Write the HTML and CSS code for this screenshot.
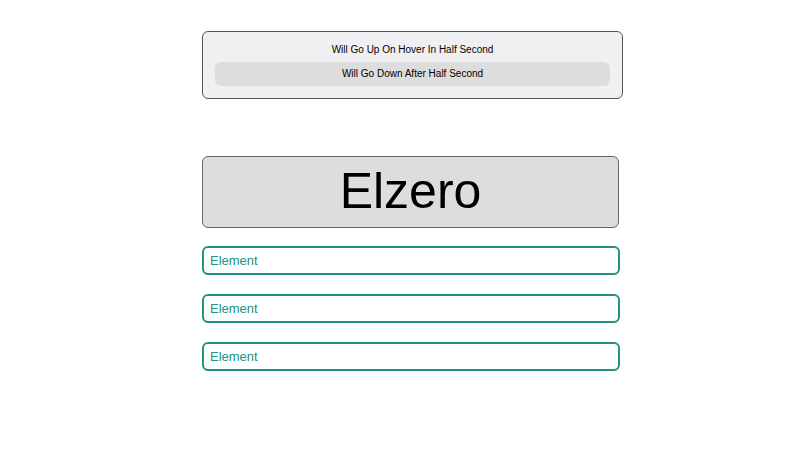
FILE: index.html
```html
<!DOCTYPE html>
<html lang="en">
<head>
<meta charset="utf-8">
<title>Transitions</title>
<link rel="stylesheet" href="styles.css">
</head>
<body>
<div class="page">
  <div class="hover-box">
    <div class="hover-line">Will Go Up On Hover In Half Second</div>
    <div class="hover-bar">Will Go Down After Half Second</div>
  </div>
  <div class="brand">Elzero</div>
  <div class="list">
    <div class="element">Element</div>
    <div class="element">Element</div>
    <div class="element">Element</div>
  </div>
</div>
</body>
</html>
```
FILE: styles.css
```css
html, body {
  margin: 0;
  padding: 0;
  background: #ffffff;
}

body {
  font-family: "Liberation Sans", Arial, sans-serif;
  color: #000000;
}

.page {
  display: flex;
  flex-direction: column;
  align-items: flex-start;
  padding: 31px 0 0 202px;
}

.hover-box {
  box-sizing: border-box;
  width: 421px;
  background: #f0f0f2;
  border: 1px solid #555555;
  border-radius: 6px;
  padding: 12px 12px 12px;
  display: flex;
  flex-direction: column;
  gap: 6px;
  font-size: 10px;
  text-align: center;
}

.hover-line {
  line-height: 12px;
}

.hover-bar {
  background: #dddddd;
  border-radius: 6px;
  padding: 6px 0;
  line-height: 12px;
}

.brand {
  box-sizing: border-box;
  width: 417px;
  margin-top: 57px;
  background: #dddddd;
  border: 1px solid #666666;
  border-radius: 6px;
  padding: 6px 0 7px;
  font-size: 50px;
  line-height: 57px;
  text-align: center;
}

.list {
  display: flex;
  flex-direction: column;
  gap: 19px;
  margin-top: 18px;
}

.element {
  box-sizing: border-box;
  width: 418px;
  height: 29px;
  border: 2px solid #23917f;
  border-radius: 6px;
  padding: 1px 7px 0 6px;
  color: #23917f;
  font-size: 13px;
  line-height: 24px;
}
```
